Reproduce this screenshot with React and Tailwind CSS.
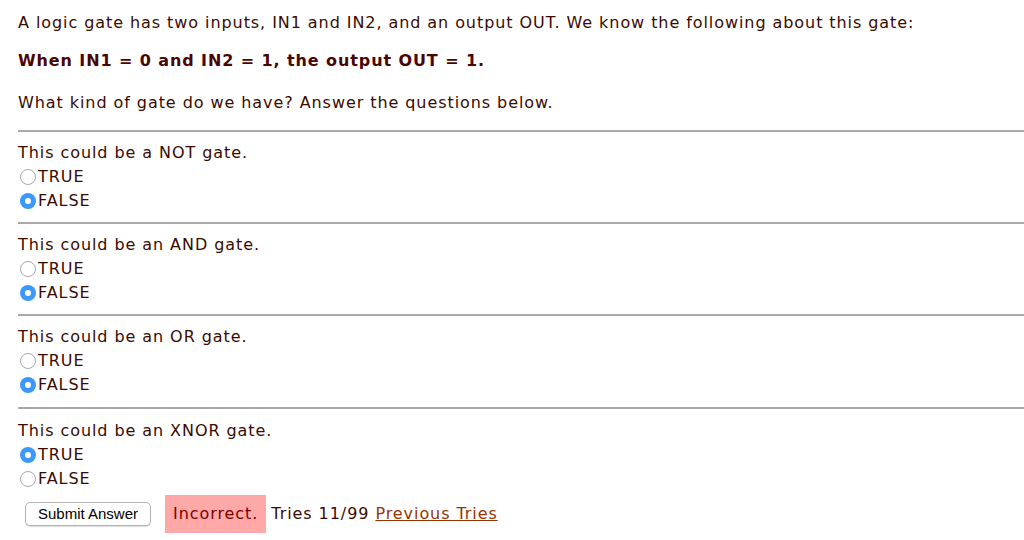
import React from 'react';

const questions = [
  { text: 'This could be a NOT gate.', answer: 'FALSE' },
  { text: 'This could be an AND gate.', answer: 'FALSE' },
  { text: 'This could be an OR gate.', answer: 'FALSE' },
  { text: 'This could be an XNOR gate.', answer: 'TRUE' },
];

function Radio({ checked, label }) {
  return (
    <div className="flex items-center h-[24px]">
      {checked ? (
        <span className="w-[16px] h-[16px] ml-[2px] mr-[2px] rounded-full bg-[#3b99fc] flex items-center justify-center">
          <span className="w-[6px] h-[6px] rounded-full bg-white"></span>
        </span>
      ) : (
        <span className="w-[16px] h-[16px] ml-[2px] mr-[2px] rounded-full border border-[#a8a8a8] bg-white"></span>
      )}
      <span>{label}</span>
    </div>
  );
}

export default function App() {
  return (
    <div
      className="w-[1024px] h-[540px] overflow-hidden bg-white text-[#3a0a00] text-[16px] tracking-[0.93px] pl-[18px]"
      style={{ fontFamily: '"DejaVu Sans", Verdana, sans-serif' }}
    >
      <p className="pt-[11px] leading-[24px]">
        A logic gate has two inputs, IN1 and IN2, and an output OUT. We know the following about this gate:
      </p>
      <p className="mt-[14px] leading-[24px] font-bold text-[#4a0500] tracking-[0.9px]">
        When IN1 = 0 and IN2 = 1, the output OUT = 1.
      </p>
      <p className="mt-[18px] leading-[24px]">What kind of gate do we have? Answer the questions below.</p>

      <div className="mt-[15px]">
        {questions.map((q, i) => (
          <div key={i}>
            <div className="border-t-2 border-[#a9a9a9] w-[1010px]"></div>
            <div className={i === 3 ? 'pt-[10px]' : i === 2 ? 'pt-[9px] pb-[10px]' : 'pt-[9px] pb-[9px]'}>
              <div className="leading-[24px]">{q.text}</div>
              <Radio checked={q.answer === 'TRUE'} label="TRUE" />
              <Radio checked={q.answer === 'FALSE'} label="FALSE" />
            </div>
          </div>
        ))}
      </div>

      <div className="flex items-center mt-[4px]">
        <button
          className="ml-[7px] h-[24px] px-[12px] border border-[#b5b5b5] rounded-[5px] bg-white text-black text-[15px] tracking-normal shadow-[0_1px_1px_rgba(0,0,0,0.15)]"
          style={{ fontFamily: '"Liberation Sans", Arial, sans-serif' }}
        >
          Submit Answer
        </button>
        <span className="ml-[14px] bg-[#ffa8a8] text-[#7a0000] px-[8px] h-[38px] flex items-center">
          Incorrect.
        </span>
        <span className="ml-[5px]">Tries 11/99</span>
        <a className="ml-[6px] underline text-[#993300]">Previous Tries</a>
      </div>
    </div>
  );
}
